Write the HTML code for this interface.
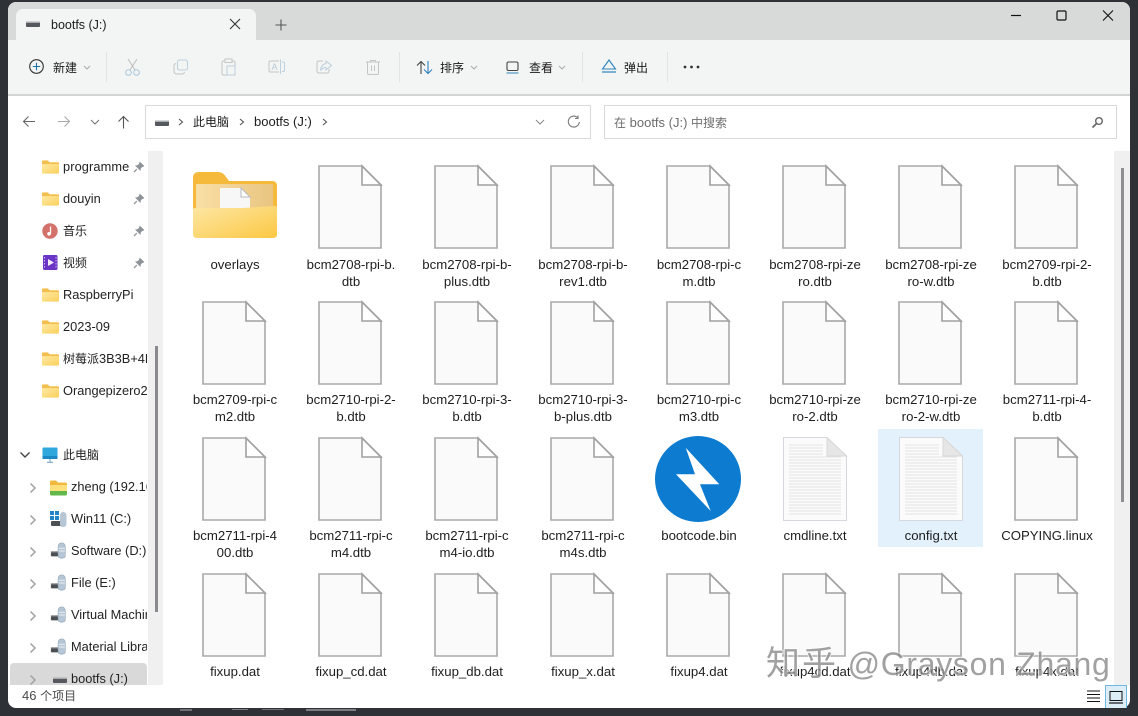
<!DOCTYPE html>
<html lang="zh"><head><meta charset="utf-8"><title>bootfs (J:)</title>
<style>
html,body{margin:0;padding:0;width:1138px;height:716px;overflow:hidden;background:#2e3236}
body{position:relative;font-family:"Liberation Sans","Noto Sans CJK SC",sans-serif;color:#1c1c1c}
#win{position:absolute;left:8px;top:2px;width:1122px;height:706px;background:#fff;border-radius:8px;overflow:hidden}
.a{position:absolute}
.t,.s,.g,svg.i{position:absolute}
.t{white-space:nowrap;font-size:13px;line-height:18px}
.s{white-space:nowrap;font-size:12.8px;line-height:18px;overflow:hidden;color:#222}
.z{font-size:12px}
.g{width:116px;text-align:center;font-size:13.2px;line-height:17px;color:#1e1e1e;white-space:nowrap}
.c1{left:177px}.c2{left:293px}.c3{left:409px}.c4{left:525px}.c5{left:641px}.c6{left:757px}.c7{left:873px}.c8{left:989px}
.k1{left:203px}.k2{left:319px}.k3{left:435px}.k4{left:551px}.k5{left:667px}.k6{left:783px}.k7{left:899px}.k8{left:1015px}
.r1{top:255.5px}.r2{top:391px}.r3{top:527px}.r4{top:663px}
.y1{top:165px}.y2{top:301px}.y3{top:437px}.y4{top:573px}
svg.i{overflow:visible}
svg.d{width:64px;height:84px}
</style></head><body>
<svg width="0" height="0" style="position:absolute"><defs>
<linearGradient id="fg" x1="0" y1="0" x2="1" y2="1"><stop offset="0" stop-color="#ffe9a3"/><stop offset="1" stop-color="#fbd05e"/></linearGradient>
<symbol id="doc" viewBox="0 0 64 84" overflow="visible"><path d="M0 1H43L62 20V83H0Z" fill="#fafafa" stroke="#a9a9a9" stroke-width="1.6"/><path d="M43 1V20H62Z" fill="#fff" stroke="#a0a0a0" stroke-width="1.6"/></symbol>
<symbol id="txt" viewBox="0 0 64 84" overflow="visible"><path d="M.5 .5H44L63.5 19V83.5H.5Z" fill="#fbfbfb" stroke="#d4d8dc"/><path d="M6 8H40M6 11H40M6 14H40M6 17H40M6 20H58M6 23H58M6 26H58M6 29H58M6 32H58M6 35H58M6 38H58M6 41H58M6 44H58M6 47H58M6 50H58M6 53H58M6 56H58M6 59H58M6 62H58M6 65H58M6 68H58M6 71H58M6 74H58M6 77H58" stroke="#e3e3e3" stroke-width="1"/><path d="M44 .5V19H63.5Z" fill="#e6e6e6" stroke="#d8d8d8"/></symbol>
<symbol id="fo" viewBox="0 0 18 16" overflow="visible"><path d="M0 2.5Q0 1 1.5 1H6L8 3H16.5Q18 3 18 4.5V8H0Z" fill="#f3c04f"/><path d="M0 6Q0 5 1 5H17Q18 5 18 6V13.5Q18 15 16.5 15H1.500Q0 15 0 13.500Z" fill="url(#fg)"/></symbol>
<symbol id="hd" viewBox="0 0 20 10" overflow="visible"><rect x="3" y="4" width="14" height="5" rx="1" fill="#55585c"/><rect x="3" y="3.500" width="14" height="1.500" fill="#a9acaf"/></symbol>
<symbol id="dr" viewBox="0 0 20 20" overflow="visible"><rect x="1" y="11" width="14" height="5" rx="1" fill="#4c5055"/><rect x="1" y="10" width="14" height="1.500" fill="#a5a9ad"/><path d="M9 6Q9 1 13 1Q17 1 17 6V15Q17 18 13 18Q9 18 9 15Z" fill="#b7c6d4" stroke="#8ba0b2" stroke-width=".6"/><path d="M9.500 7H16.500M9.500 10H16.500" stroke="#eef3f7"/></symbol>
<symbol id="pin" viewBox="0 0 12 12" overflow="visible"><path d="M7 .7L11.300 5 10 6 9.500 5.700 7.700 7.700 7.500 10 2 4.500 4.300 4.300 6.300 2.500 6 2Z" fill="#8e949a"/><path d="M3.800 8.200L1 11" stroke="#8e949a" stroke-width="1.300"/></symbol>
<symbol id="chr" viewBox="0 0 8 12" overflow="visible"><path d="M1.500 1.500L6 6 1.500 10.500" fill="none" stroke="#a2a2a2" stroke-width="1.500"/></symbol>
</defs></svg>

<div class="a" style="left:180px;top:709px;width:12px;height:1.500px;background:#6d7074"></div>
<div class="a" style="left:232px;top:708.500px;width:16px;height:1.500px;background:#7a7d80"></div>
<div class="a" style="left:262px;top:708.500px;width:22px;height:1.500px;background:#6d7074"></div>
<div class="a" style="left:306px;top:709px;width:50px;height:1.500px;background:#7a7d80"></div>

<div id="win">
<div class="a" style="left:0;top:0;width:1122px;height:38px;background:#d8d9d9"></div>
<div class="a" style="left:8px;top:7px;width:240px;height:31px;background:#f3f4f4;border-radius:7px 7px 0 0"></div>
<div class="a" style="left:0;top:38px;width:1122px;height:54px;background:#f3f4f4"></div>
<div class="a" style="left:0;top:92px;width:1122px;height:1.500px;background:#d3d4d4"></div>
<div class="a" style="left:140px;top:149px;width:15px;height:534px;background:#f0f0f0"></div>
<div class="a" style="left:147px;top:344px;width:2.500px;height:266px;background:#8a8a8e"></div>
<div class="a" style="left:1106px;top:149px;width:16px;height:534px;background:#f0f0f0"></div>
<div class="a" style="left:1113px;top:166px;width:2.500px;height:334px;background:#8e8e93"></div>
<div class="a" style="left:137px;top:103px;width:446px;height:34px;box-sizing:border-box;background:#fff;border:1px solid #d9d9d9"></div>
<div class="a" style="left:596px;top:103px;width:513px;height:34px;box-sizing:border-box;background:#fff;border:1px solid #d9d9d9"></div>
<div class="a" style="left:2px;top:661px;width:137px;height:22px;background:#d9d9d9;border-radius:4px 4px 0 0"></div>
<div class="a" style="left:870px;top:427px;width:105px;height:118px;background:#e3f1fc"></div>
</div>

<!-- title bar -->
<svg class="i" style="left:23px;top:18px" width="20" height="10"><use href="#hd"/></svg>
<div class="t" style="left:51px;top:16px;font-size:12.5px">bootfs (J:)</div>
<svg class="i" style="left:228px;top:17px" width="14" height="14"><path d="M2 2L12 12M12 2L2 12" stroke="#333" stroke-width="1.100" fill="none"/></svg>
<svg class="i" style="left:275px;top:19px" width="12" height="12"><path d="M6 .5V11.500M.5 6H11.500" stroke="#555" stroke-width="1.100"/></svg>
<svg class="i" style="left:1010px;top:10px" width="110" height="12"><path d="M1 5.500H11" stroke="#111" stroke-width="1.200"/><rect x="47" y="1" width="9" height="9" rx="1.200" fill="none" stroke="#111" stroke-width="1.200"/><path d="M93 .5L103 10.500M103 .5L93 10.500" stroke="#111" stroke-width="1.100"/></svg>

<!-- toolbar -->
<svg class="i" style="left:29px;top:59px" width="16" height="16"><circle cx="7.500" cy="7.500" r="6.800" fill="none" stroke="#333" stroke-width="1.100"/><path d="M7.500 3.800V11.200M3.800 7.500H11.200" stroke="#1f6fa8" stroke-width="1.100"/></svg>
<div class="t z" style="left:53px;top:59px">新建</div>
<svg class="i" style="left:83px;top:65px" width="8" height="5"><path d="M1 1L4 4 7 1" fill="none" stroke="#aaa"/></svg>
<div class="a" style="left:106px;top:52px;width:1px;height:30px;background:#e2e3e3"></div>
<svg class="i" style="left:124px;top:58px" width="18" height="19"><path d="M4 1L11 12M13 1L6 12" stroke="#bcbcbc" fill="none"/><circle cx="4.500" cy="14.500" r="2.800" fill="none" stroke="#a9c6dd"/><circle cx="12.500" cy="14.500" r="2.800" fill="none" stroke="#a9c6dd"/></svg>
<svg class="i" style="left:173px;top:59px" width="16" height="16"><rect x="4.500" y="1" width="10" height="10" rx="2" fill="none" stroke="#bccfdd"/><path d="M3 4.500Q1 5 1 7V12Q1 15 4 15H9Q11 15 11.500 13" fill="none" stroke="#c5c5c5"/></svg>
<svg class="i" style="left:221px;top:58px" width="16" height="18"><rect x="1" y="3" width="13" height="14" rx="1.500" fill="none" stroke="#c5c5c5"/><rect x="4" y="1" width="7" height="3.500" fill="#f3f4f4" stroke="#c5c5c5"/><rect x="6" y="8" width="8" height="9" fill="none" stroke="#bccfdd"/></svg>
<svg class="i" style="left:268px;top:59px" width="18" height="16"><path d="M11 2H2.500Q1 2 1 3.500V11.500Q1 13 2.500 13H11" fill="none" stroke="#c5c5c5"/><path d="M14 3H15Q16.500 3 16.500 4.500V11Q16.500 12.500 15 12.500H14M12.500 .5V15" fill="none" stroke="#bccfdd"/><text x="3.500" y="11" font-size="9" fill="#b9c9d6" font-family="Liberation Sans">A</text></svg>
<svg class="i" style="left:316px;top:59px" width="17" height="16"><path d="M7 2H3Q1 2 1 4V12Q1 14 3 14H11Q13 14 13 12V10" fill="none" stroke="#c5c5c5"/><path d="M10 2L15.500 6.500 10 11V8.500Q6.500 8.500 4.500 11.500 5 5.500 10 4.500Z" fill="none" stroke="#bccfdd"/></svg>
<svg class="i" style="left:365px;top:59px" width="16" height="17"><path d="M1 3H15M5.500 3V1.500H10.500V3M2.500 3V14Q2.500 15.500 4 15.500H12Q13.500 15.500 13.500 14V3M6.500 6.500V12M9.500 6.500V12" fill="none" stroke="#c5c5c5"/></svg>
<div class="a" style="left:399px;top:52px;width:1px;height:30px;background:#e2e3e3"></div>
<svg class="i" style="left:416px;top:60px" width="17" height="15"><path d="M5 14V1.500M1 5.500L5 1.500 9 5.500" fill="none" stroke="#444" stroke-width="1.100"/><path d="M12 1V13.500M8 9.500L12 13.500 16 9.500" fill="none" stroke="#2d84bd" stroke-width="1.100"/></svg>
<div class="t z" style="left:440px;top:59px">排序</div>
<svg class="i" style="left:470px;top:65px" width="8" height="5"><path d="M1 1L4 4 7 1" fill="none" stroke="#aaa"/></svg>
<svg class="i" style="left:506px;top:61px" width="14" height="13"><rect x="1" y="1" width="11" height="8.500" rx="1.500" fill="none" stroke="#444" stroke-width="1.100"/><path d="M.5 12H12.500" stroke="#2d84bd"/></svg>
<div class="t z" style="left:529px;top:59px">查看</div>
<svg class="i" style="left:558px;top:65px" width="8" height="5"><path d="M1 1L4 4 7 1" fill="none" stroke="#aaa"/></svg>
<div class="a" style="left:582px;top:52px;width:1px;height:30px;background:#e2e3e3"></div>
<svg class="i" style="left:601px;top:59px" width="16" height="15"><path d="M8 1L14.500 10H1.500Z" fill="none" stroke="#2d84bd" stroke-width="1.100"/><path d="M1 13H15" stroke="#2d84bd" stroke-width="1.200"/></svg>
<div class="t z" style="left:624px;top:59px">弹出</div>
<div class="a" style="left:667px;top:52px;width:1px;height:30px;background:#e2e3e3"></div>
<svg class="i" style="left:683px;top:65px" width="18" height="4"><circle cx="2" cy="2" r="1.400" fill="#333"/><circle cx="8.500" cy="2" r="1.400" fill="#333"/><circle cx="15" cy="2" r="1.400" fill="#333"/></svg>

<!-- nav -->
<svg class="i" style="left:22px;top:115px" width="14" height="13"><path d="M13 6.500H1.500M6.500 1.500L1.500 6.500 6.500 11.500" fill="none" stroke="#666" stroke-width="1.100"/></svg>
<svg class="i" style="left:57px;top:115px" width="14" height="13"><path d="M1 6.500H12.500M7.500 1.500L12.500 6.500 7.500 11.500" fill="none" stroke="#aaa" stroke-width="1.100"/></svg>
<svg class="i" style="left:90px;top:119px" width="10" height="6"><path d="M1 1L5 5 9 1" fill="none" stroke="#777" stroke-width="1.100"/></svg>
<svg class="i" style="left:117px;top:115px" width="13" height="14"><path d="M6.500 13.500V1.500M1.500 6.500L6.500 1.500 11.500 6.500" fill="none" stroke="#555" stroke-width="1.100"/></svg>
<svg class="i" style="left:152px;top:117px" width="20" height="10"><use href="#hd"/></svg>
<svg class="i" style="left:178px;top:118px" width="6" height="8"><path d="M1 1L4.500 4 1 7" fill="none" stroke="#555" stroke-width="1.100"/></svg>
<div class="t z" style="left:193px;top:113px">此电脑</div>
<svg class="i" style="left:239px;top:118px" width="6" height="8"><path d="M1 1L4.500 4 1 7" fill="none" stroke="#555" stroke-width="1.100"/></svg>
<div class="t" style="left:254px;top:113px">bootfs (J:)</div>
<svg class="i" style="left:322px;top:118px" width="6" height="8"><path d="M1 1L4.500 4 1 7" fill="none" stroke="#555" stroke-width="1.100"/></svg>
<svg class="i" style="left:535px;top:119px" width="10" height="6"><path d="M1 1L5 5 9 1" fill="none" stroke="#888"/></svg>
<svg class="i" style="left:567px;top:115px" width="14" height="14"><path d="M12.300 7A5.500 5.500 0 1 1 10.500 2.500M11 .5V3.500H8" fill="none" stroke="#777" stroke-width="1.100"/></svg>
<div class="t" style="left:614px;top:114px;color:#6d6d6d"><span class="z">在</span> bootfs (J:) <span class="z">中搜索</span></div>
<svg class="i" style="left:1091px;top:116px" width="13" height="13"><circle cx="8" cy="5" r="3.300" fill="none" stroke="#666" stroke-width="1.400"/><path d="M5.500 7.500L1.500 11.500" stroke="#666" stroke-width="1.800"/></svg>

<!-- sidebar -->
<svg class="i" style="left:42px;top:159px" width="17" height="16"><use href="#fo"/></svg>
<div class="s" style="left:63px;top:158px;width:68px;letter-spacing:.1px">programme</div>
<svg class="i" style="left:133px;top:161px" width="12" height="12"><use href="#pin"/></svg>
<svg class="i" style="left:42px;top:191px" width="17" height="16"><use href="#fo"/></svg>
<div class="s" style="left:63px;top:190px;width:68px">douyin</div>
<svg class="i" style="left:133px;top:193px" width="12" height="12"><use href="#pin"/></svg>
<svg class="i" style="left:42px;top:223px" width="16" height="16"><circle cx="8" cy="8" r="7.700" fill="#d3726a"/><path d="M8.500 3.500V10.500" stroke="#fff" stroke-width="1.300"/><circle cx="7" cy="10.800" r="1.800" fill="#fff"/></svg>
<div class="s z" style="left:63px;top:222px;width:68px">音乐</div>
<svg class="i" style="left:133px;top:225px" width="12" height="12"><use href="#pin"/></svg>
<svg class="i" style="left:43px;top:255px" width="15" height="15"><rect width="14.500" height="15" rx="1.500" fill="#6a35c4"/><path d="M5 4L11 7.500 5 11Z" fill="#f2eafd"/><path d="M1.500 2V13M13 2V13" stroke="#c9b1f0" stroke-dasharray="1.500 1.500"/></svg>
<div class="s z" style="left:63px;top:254px;width:68px">视频</div>
<svg class="i" style="left:133px;top:257px" width="12" height="12"><use href="#pin"/></svg>
<svg class="i" style="left:42px;top:287px" width="17" height="16"><use href="#fo"/></svg>
<div class="s" style="left:63px;top:286px;width:84px">RaspberryPi</div>
<svg class="i" style="left:42px;top:319px" width="17" height="16"><use href="#fo"/></svg>
<div class="s" style="left:63px;top:318px;width:84px">2023-09</div>
<svg class="i" style="left:42px;top:351px" width="17" height="16"><use href="#fo"/></svg>
<div class="s" style="left:63px;top:350px;width:84px"><span class="z">树莓派</span>3B3B+4B</div>
<svg class="i" style="left:42px;top:383px" width="17" height="16"><use href="#fo"/></svg>
<div class="s" style="left:63px;top:382px;width:84px">Orangepizero2</div>
<svg class="i" style="left:19px;top:451px" width="12" height="8"><path d="M1.500 1.500L6 6 10.500 1.500" fill="none" stroke="#444" stroke-width="1.400"/></svg>
<svg class="i" style="left:42px;top:447px" width="16" height="16"><rect x=".5" y=".5" width="15" height="11.500" rx="1" fill="#2fa6dc"/><rect x=".5" y="9" width="15" height="3" fill="#1b8ac4"/><path d="M8 12V15M5 15.300H11" stroke="#7aa8c0" stroke-width="1.100"/></svg>
<div class="s z" style="left:63px;top:446px;width:84px">此电脑</div>
<svg class="i" style="left:29px;top:482px" width="8" height="12"><use href="#chr"/></svg>
<svg class="i" style="left:50px;top:480px" width="17" height="16"><path d="M0 2Q0 .5 1.500 .5H6L8 2.500H15.500Q17 2.500 17 4V8H0Z" fill="#f2b93e"/><path d="M0 5H17V11H0Z" fill="#fde07c"/><path d="M0 11H17V14Q17 15.500 15.500 15.500H1.500Q0 15.500 0 14Z" fill="#62b84a"/></svg>
<div class="s" style="left:71px;top:478px;width:76px">zheng (192.168.1.1)</div>
<svg class="i" style="left:29px;top:514px" width="8" height="12"><use href="#chr"/></svg>
<svg class="i" style="left:50px;top:511px" width="17" height="16"><rect x="0" y="0" width="4" height="4" fill="#2383c9"/><rect x="5" y="0" width="4" height="4" fill="#2383c9"/><rect x="0" y="5" width="4" height="4" fill="#2383c9"/><rect x="5" y="5" width="4" height="4" fill="#2383c9"/><rect x="1" y="10" width="12" height="5" rx="1" fill="#4c5055"/><path d="M10 5Q10 1 13 1Q16.500 1 16.500 5V13Q16.500 16 13 16Q10 16 10 13Z" fill="#b7c6d4"/></svg>
<div class="s" style="left:71px;top:510px;width:76px">Win11 (C:)</div>
<svg class="i" style="left:29px;top:546px" width="8" height="12"><use href="#chr"/></svg>
<svg class="i" style="left:50px;top:542px" width="18" height="18"><use href="#dr"/></svg>
<div class="s" style="left:71px;top:542px;width:76px">Software (D:)</div>
<svg class="i" style="left:29px;top:578px" width="8" height="12"><use href="#chr"/></svg>
<svg class="i" style="left:50px;top:574px" width="18" height="18"><use href="#dr"/></svg>
<div class="s" style="left:71px;top:574px;width:76px">File (E:)</div>
<svg class="i" style="left:29px;top:610px" width="8" height="12"><use href="#chr"/></svg>
<svg class="i" style="left:50px;top:606px" width="18" height="18"><use href="#dr"/></svg>
<div class="s" style="left:71px;top:606px;width:76px">Virtual Machines</div>
<svg class="i" style="left:29px;top:642px" width="8" height="12"><use href="#chr"/></svg>
<svg class="i" style="left:50px;top:638px" width="18" height="18"><use href="#dr"/></svg>
<div class="s" style="left:71px;top:638px;width:76px">Material Library</div>
<svg class="i" style="left:29px;top:674px" width="8" height="12"><use href="#chr"/></svg>
<svg class="i" style="left:50px;top:674px" width="20" height="10"><use href="#hd"/></svg>
<div class="s" style="left:71px;top:670px;width:76px">bootfs (J:)</div>
<div class="t" style="left:22px;top:687px;color:#4a4a4a">46 <span class="z">个项目</span></div>

<!-- folder -->
<svg class="i" style="left:192px;top:172px" width="85" height="67" viewBox="0 0 85 67">
<defs><linearGradient id="p" x1="0" x2="1"><stop offset="0" stop-color="#f9dfa4"/><stop offset="1" stop-color="#e9c581"/></linearGradient><linearGradient id="q" x1="0" y1="0" x2="1" y2="1"><stop offset="0" stop-color="#fde7a5"/><stop offset="1" stop-color="#fcc843"/></linearGradient></defs>
<path d="M1 6Q1 0 7 0H26Q31 0 34 5L37 9H80Q85 9 85 14V40H1Z" fill="#f5b93b"/>
<rect x="4" y="12" width="77" height="34" fill="url(#p)"/>
<path d="M28 16H49L58 25V46H28Z" fill="#f7f7f8"/><path d="M49 16V25H58Z" fill="#fff" stroke="#b9b9c0"/>
<path d="M1 38Q1 36 3 36L30 36Q45 36 50 36L83 34Q85 34 85 36V62Q85 66 81 66H5Q1 66 1 62Z" fill="url(#q)"/>
</svg>
<div class="g c1 r1">overlays</div>

<!-- row1 -->
<svg class="i d k2 y1"><use href="#doc"/></svg><div class="g c2 r1">bcm2708-rpi-b.<br>dtb</div>
<svg class="i d k3 y1"><use href="#doc"/></svg><div class="g c3 r1">bcm2708-rpi-b-<br>plus.dtb</div>
<svg class="i d k4 y1"><use href="#doc"/></svg><div class="g c4 r1">bcm2708-rpi-b-<br>rev1.dtb</div>
<svg class="i d k5 y1"><use href="#doc"/></svg><div class="g c5 r1">bcm2708-rpi-c<br>m.dtb</div>
<svg class="i d k6 y1"><use href="#doc"/></svg><div class="g c6 r1">bcm2708-rpi-ze<br>ro.dtb</div>
<svg class="i d k7 y1"><use href="#doc"/></svg><div class="g c7 r1">bcm2708-rpi-ze<br>ro-w.dtb</div>
<svg class="i d k8 y1"><use href="#doc"/></svg><div class="g c8 r1">bcm2709-rpi-2-<br>b.dtb</div>
<!-- row2 -->
<svg class="i d k1 y2"><use href="#doc"/></svg><div class="g c1 r2">bcm2709-rpi-c<br>m2.dtb</div>
<svg class="i d k2 y2"><use href="#doc"/></svg><div class="g c2 r2">bcm2710-rpi-2-<br>b.dtb</div>
<svg class="i d k3 y2"><use href="#doc"/></svg><div class="g c3 r2">bcm2710-rpi-3-<br>b.dtb</div>
<svg class="i d k4 y2"><use href="#doc"/></svg><div class="g c4 r2">bcm2710-rpi-3-<br>b-plus.dtb</div>
<svg class="i d k5 y2"><use href="#doc"/></svg><div class="g c5 r2">bcm2710-rpi-c<br>m3.dtb</div>
<svg class="i d k6 y2"><use href="#doc"/></svg><div class="g c6 r2">bcm2710-rpi-ze<br>ro-2.dtb</div>
<svg class="i d k7 y2"><use href="#doc"/></svg><div class="g c7 r2">bcm2710-rpi-ze<br>ro-2-w.dtb</div>
<svg class="i d k8 y2"><use href="#doc"/></svg><div class="g c8 r2">bcm2711-rpi-4-<br>b.dtb</div>
<!-- row3 -->
<svg class="i d k1 y3"><use href="#doc"/></svg><div class="g c1 r3">bcm2711-rpi-4<br>00.dtb</div>
<svg class="i d k2 y3"><use href="#doc"/></svg><div class="g c2 r3">bcm2711-rpi-c<br>m4.dtb</div>
<svg class="i d k3 y3"><use href="#doc"/></svg><div class="g c3 r3">bcm2711-rpi-c<br>m4-io.dtb</div>
<svg class="i d k4 y3"><use href="#doc"/></svg><div class="g c4 r3">bcm2711-rpi-c<br>m4s.dtb</div>
<svg class="i" style="left:655px;top:436px" width="86" height="86" viewBox="0 0 86 86"><circle cx="43" cy="43" r="43" fill="#0c7bd0"/><path d="M30.700 11.700L64.300 48.300H45L55.700 75 21 38.300H40Z" fill="#fff"/></svg>
<div class="g c5 r3">bootcode.bin</div>
<svg class="i d k6 y3"><use href="#txt"/></svg><div class="g c6 r3">cmdline.txt</div>
<svg class="i d k7 y3"><use href="#txt"/></svg><div class="g c7 r3">config.txt</div>
<svg class="i d k8 y3"><use href="#doc"/></svg><div class="g c8 r3">COPYING.linux</div>
<!-- row4 -->
<svg class="i d k1 y4"><use href="#doc"/></svg><div class="g c1 r4">fixup.dat</div>
<svg class="i d k2 y4"><use href="#doc"/></svg><div class="g c2 r4">fixup_cd.dat</div>
<svg class="i d k3 y4"><use href="#doc"/></svg><div class="g c3 r4">fixup_db.dat</div>
<svg class="i d k4 y4"><use href="#doc"/></svg><div class="g c4 r4">fixup_x.dat</div>
<svg class="i d k5 y4"><use href="#doc"/></svg><div class="g c5 r4">fixup4.dat</div>
<svg class="i d k6 y4"><use href="#doc"/></svg><div class="g c6 r4">fixup4cd.dat</div>
<svg class="i d k7 y4"><use href="#doc"/></svg><div class="g c7 r4">fixup4db.dat</div>
<svg class="i d k8 y4"><use href="#doc"/></svg><div class="g c8 r4">fixup4x.dat</div>

<!-- view toggles -->
<svg class="i" style="left:1087px;top:690px" width="14" height="13"><path d="M0 1H13M0 4.500H13M0 8H13M0 11.500H13" stroke="#111" stroke-width="1.100"/></svg>
<div class="a" style="left:1105px;top:685px;width:20px;height:22px;background:#dcedf8;border:1px solid #70b8e0;border-bottom:0;box-sizing:content-box"></div>
<svg class="i" style="left:1109px;top:691px" width="15" height="13"><rect x="1" y=".5" width="12" height="9" fill="none" stroke="#111"/><path d="M0 12H14" stroke="#111" stroke-width="1.200"/></svg>

<!-- watermark -->
<div class="t" style="left:766px;top:644px;font-size:32px;line-height:40px;color:rgba(125,125,125,.72);-webkit-text-stroke:1.6px rgba(255,255,255,.75);paint-order:stroke fill;letter-spacing:.7px"><span style="font-size:34px;letter-spacing:2px">知乎</span> @Grayson Zhang</div>
</body></html>
